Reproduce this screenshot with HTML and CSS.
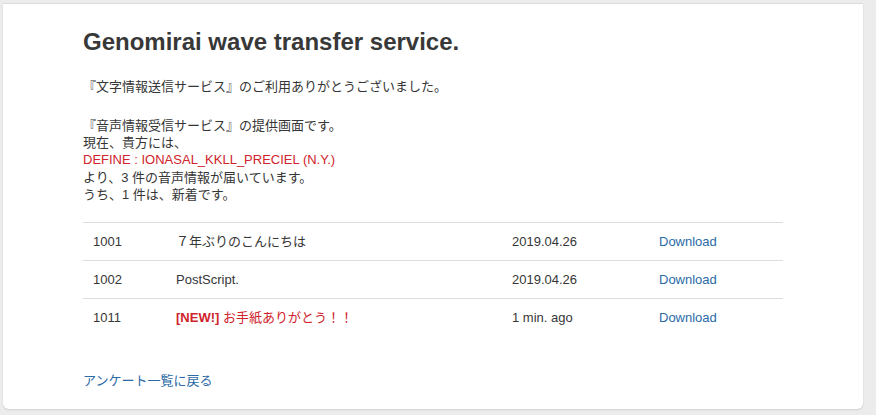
FILE: index.html
```html
<!DOCTYPE html>
<html lang="ja">
<head>
<meta charset="utf-8">
<title>Genomirai wave transfer service.</title>
<link rel="stylesheet" href="styles.css">
</head>
<body>
<main class="card">
  <h1 class="title">Genomirai wave transfer service.</h1>
  <p class="lead">『文字情報送信サービス』のご利用ありがとうございました。</p>
  <p class="info">
    『音声情報受信サービス』の提供画面です。<br>
    現在、貴方には、<br>
    <span class="red">DEFINE : IONASAL_KKLL_PRECIEL (N.Y.)</span><br>
    より、3 件の音声情報が届いています。<br>
    うち、1 件は、新着です。
  </p>
  <table class="list">
    <colgroup>
      <col class="c-id"><col class="c-title"><col class="c-date"><col class="c-dl">
    </colgroup>
    <tbody>
      <tr><td>1001</td><td>７年ぶりのこんにちは</td><td>2019.04.26</td><td><a href="#">Download</a></td></tr>
      <tr><td>1002</td><td>PostScript.</td><td>2019.04.26</td><td><a href="#">Download</a></td></tr>
      <tr><td>1011</td><td class="red"><b>[NEW!]</b> お手紙ありがとう！！</td><td>1 min. ago</td><td><a href="#">Download</a></td></tr>
    </tbody>
  </table>
  <a class="back" href="#">アンケート一覧に戻る</a>
</main>
</body>
</html>
```
FILE: styles.css
```css
html, body {
  margin: 0;
  padding: 0;
}
body {
  background: #ececec;
  font-family: "Liberation Sans", Arial, "Noto Sans CJK JP", sans-serif;
  font-size: 13px;
  color: #363636;
  padding: 3px 13px 5px 3px;
}
.card {
  display: flex;
  flex-direction: column;
  align-items: flex-start;
  background: #fff;
  border-top: 1px solid #dcdcdc;
  border-radius: 0 0 6px 6px;
  box-shadow: 0 1px 2px rgba(0,0,0,0.12);
  padding: 23px 80px 22px 80px;
  height: 406px;
  box-sizing: border-box;
}
.title {
  margin: 0;
  font-size: 24px;
  font-weight: bold;
  color: #383838;
  line-height: 30px;
}
.lead {
  margin: 21px 0 0 0;
  line-height: 17px;
}
.info {
  margin: 22px 0 0 0;
  line-height: 17.2px;
}
.red {
  color: #d0232b;
}
.list {
  margin-top: 19px;
  width: 700px;
  border-collapse: collapse;
  table-layout: fixed;
}
.c-id { width: 83px; }
.c-title { width: 336px; }
.c-date { width: 147px; }
.c-dl { width: 134px; }
.list td {
  border-top: 1px solid #dddddd;
  padding: 0 10px;
  height: 37px;
  line-height: 17px;
  white-space: nowrap;
}
.list a, .back {
  color: #2a6aa6;
  text-decoration: none;
}
.back {
  margin-top: 34px;
}
```
